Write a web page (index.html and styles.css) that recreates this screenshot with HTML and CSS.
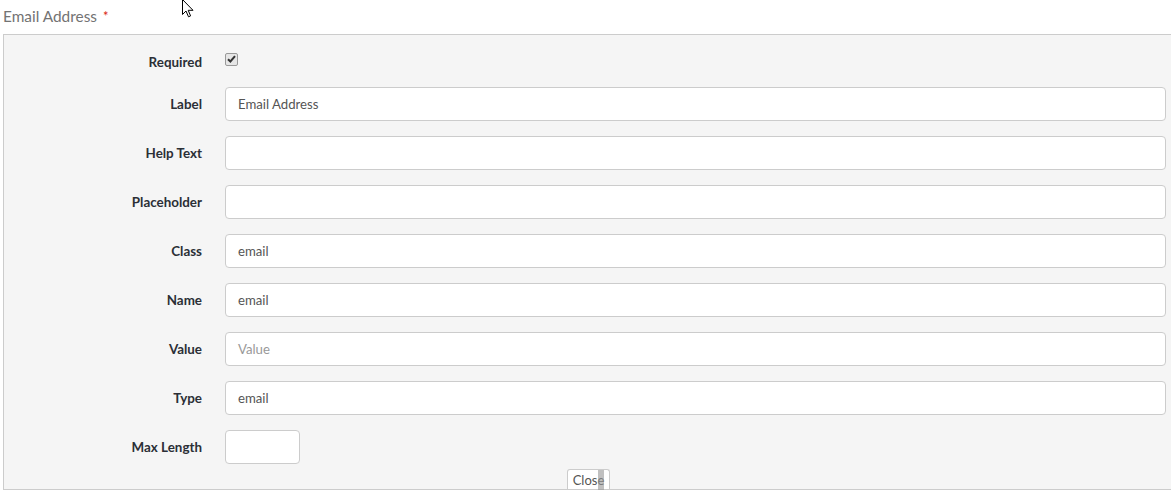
FILE: index.html
```html
<!DOCTYPE html>
<html>
<head>
<meta charset="utf-8">
<link rel="stylesheet" href="styles.css">
</head>
<body>
<div class="field-title">Email Address <span class="req">*</span></div>
<div class="panel">
  <div class="form">
    <div class="row row-check">
      <div class="lbl">Required</div>
      <div class="ctl"><span class="check"><svg width="9" height="8" viewBox="0 0 9 8"><path d="M1 4.2 L3.4 6.5 L8 1.2" fill="none" stroke="#333" stroke-width="2"/></svg></span></div>
    </div>
    <div class="row"><div class="lbl">Label</div><div class="ctl"><div class="input">Email Address</div></div></div>
    <div class="row"><div class="lbl">Help Text</div><div class="ctl"><div class="input"></div></div></div>
    <div class="row"><div class="lbl">Placeholder</div><div class="ctl"><div class="input"></div></div></div>
    <div class="row"><div class="lbl">Class</div><div class="ctl"><div class="input">email</div></div></div>
    <div class="row"><div class="lbl">Name</div><div class="ctl"><div class="input">email</div></div></div>
    <div class="row"><div class="lbl">Value</div><div class="ctl"><div class="input placeholder">Value</div></div></div>
    <div class="row"><div class="lbl">Type</div><div class="ctl"><div class="input">email</div></div></div>
    <div class="row"><div class="lbl">Max Length</div><div class="ctl"><div class="input short"></div></div></div>
  </div>
  <div class="footer"><span class="close-btn">Close<span class="caret"></span></span></div>
</div>
<svg class="cursor" width="13" height="19" viewBox="0 0 13 19"><path d="M0.5 0.5 L0.5 15.5 L4 12 L6.5 17.8 L8.6 16.9 L6.2 11.3 L11 11.3 Z" fill="#fff" stroke="#000" stroke-width="1" stroke-linejoin="miter"/></svg>
</body>
</html>
```
FILE: styles.css
```css
html, body {
  margin: 0;
  padding: 0;
  background: #fff;
  overflow: hidden;
}
body {
  font-family: Lato, "Noto Sans", sans-serif;
  color: #333;
  position: relative;
  width: 1171px;
  height: 495px;
}
.field-title {
  height: 34px;
  line-height: 32px;
  padding-left: 3px;
  font-size: 15.4px;
  color: #737373;
}
.req {
  color: #d9230f;
  font-size: 13px;
  margin-left: 2px;
  vertical-align: 1px;
}
.panel {
  margin-left: 3px;
  width: 1169px;
  box-sizing: border-box;
  border: 1px solid #ccc;
  background: #f5f5f5;
  height: 456px;
  display: flex;
  flex-direction: column;
}
.form {
  padding: 15px 5px 0 0;
  display: flex;
  flex-direction: column;
  gap: 15px;
}
.row {
  display: grid;
  grid-template-columns: 198px 1fr;
  column-gap: 23px;
  align-items: center;
  height: 34px;
}
.row-check {
  height: 22px;
}
.row-check .lbl {
  padding-top: 2px;
}
.lbl {
  text-align: right;
  font-weight: bold;
  font-size: 13.4px;
  color: #2b2f36;
}
.check {
  display: flex;
  align-items: center;
  justify-content: center;
  width: 11px;
  height: 11px;
  border: 1px solid #999;
  border-radius: 2px;
  background: #e6e6e6;
  margin-top: -4px;
}
.input {
  box-sizing: border-box;
  height: 34px;
  border: 1px solid #ccc;
  border-radius: 4px;
  background: #fff;
  padding: 0 12px;
  line-height: 32px;
  font-size: 13.2px;
  color: #555;
}
.input.placeholder {
  color: #999;
}
.input.short {
  width: 75px;
}
.footer {
  margin-top: auto;
  display: flex;
  justify-content: center;
  padding-left: 2px;
}
.close-btn {
  position: relative;
  box-sizing: border-box;
  height: 20px;
  width: 43px;
  border: 1px solid #ccc;
  border-bottom: none;
  border-radius: 3px 3px 0 0;
  background: #fff;
  font-size: 13px;
  line-height: 21px;
  color: #555;
  text-align: center;
}
.caret {
  position: absolute;
  left: 30px;
  top: 0;
  width: 6px;
  height: 20px;
  background: rgba(150,150,150,0.6);
}
.cursor {
  position: absolute;
  left: 182px;
  top: -1px;
}
```
